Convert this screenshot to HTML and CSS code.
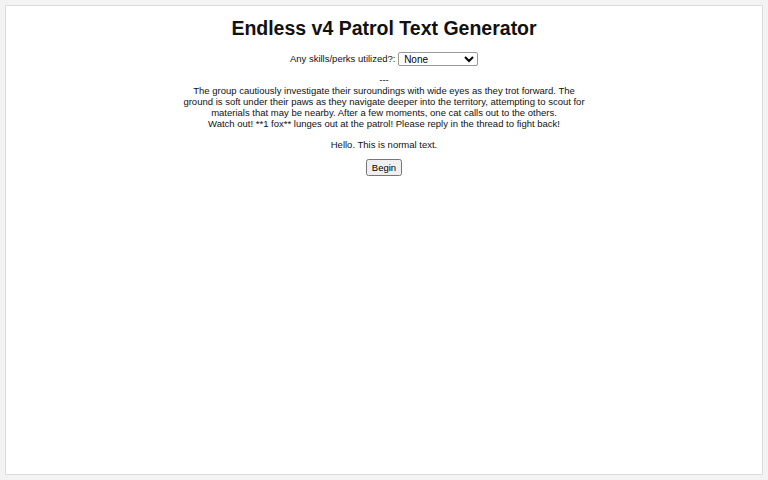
FILE: index.html
```html
<!DOCTYPE html>
<html lang="en">
<head>
  <meta charset="UTF-8">
  <title>Endless v4 Patrol Text Generator</title>
  <link rel="stylesheet" href="styles.css">
</head>
<body>
  <div class="container">
    <h1>Endless v4 Patrol Text Generator</h1>

    <div class="options">
      <label for="skills">Any skills/perks utilized?:</label>
      <select id="skills">
        <option>None</option>
      </select>
    </div>

    <div class="output">
      ---<br>
      The group cautiously investigate their suroundings with wide eyes as they trot forward. The ground is soft under their paws as they navigate deeper into the territory, attempting to scout for materials that may be nearby. After a few moments, one cat calls out to the others.<br>
      Watch out! **1 fox** lunges out at the patrol! Please reply in the thread to fight back!
    </div>

    <p class="normal">Hello. This is normal text.</p>

    <button id="begin">Begin</button>
  </div>
</body>
</html>
```

FILE: styles.css
```css
* {
  box-sizing: border-box;
}

body {
  margin: 0;
  padding: 5px;
  background: #f3f3f3;
  font-family: "Liberation Sans", Arial, sans-serif;
  color: #111;
}

.container {
  height: 470px;
  background: #fff;
  border: 1px solid #dcdcdc;
  text-align: center;
  padding: 8px 20px;
}

h1 {
  margin: 0 0 10px;
  font-size: 19.5px;
  line-height: 28px;
}

.options {
  font-size: 9.5px;
  line-height: 12px;
  margin-bottom: 8px;
}

.options select {
  font-family: "Liberation Sans", Arial, sans-serif;
  font-size: 10px;
  width: 80px;
  height: 14px;
  padding: 0 0 0 1px;
  vertical-align: middle;
  background: #fff;
  border: 1px solid #999;
  border-radius: 2px;
}

.output {
  width: 404px;
  margin: 0 auto;
  font-size: 9.5px;
  line-height: 11px;
}

.normal {
  font-size: 9.5px;
  line-height: 11px;
  margin: 10px 0 7px;
}

#begin {
  font-family: "Liberation Sans", Arial, sans-serif;
  font-size: 9.5px;
  line-height: 11px;
  padding: 1px 4px;
}
```
